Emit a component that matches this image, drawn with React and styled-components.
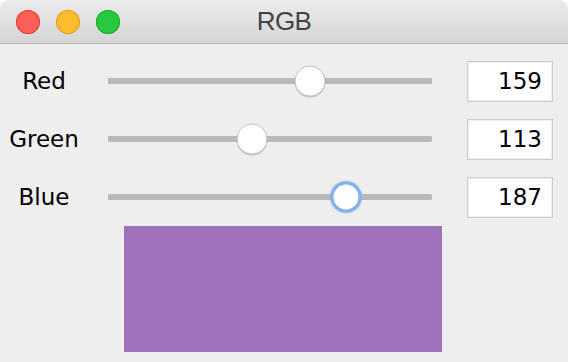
import styled, { createGlobalStyle } from 'styled-components';

const GlobalStyle = createGlobalStyle`
	html, body {
		margin: 0;
		padding: 0;
		background: #fff;
	}
	#root {
		width: 568px;
		height: 362px;
	}
`;

const channels = [
	{ name: 'Red', value: 159 },
	{ name: 'Green', value: 113 },
	{ name: 'Blue', value: 187, focused: true },
];

const TRACK = 324;

const App = () => {
	const [r, g, b] = channels.map(c => c.value);
	return (
		<>
			<GlobalStyle />
			<Window>
				<TitleBar>
					<Lights>
						<Light color='#fe5f57' edge='#e0443e' />
						<Light color='#febc2e' edge='#dea123' />
						<Light color='#28c840' edge='#1aab29' />
					</Lights>
					<Title>RGB</Title>
					<span />
				</TitleBar>
				<Content>
					{channels.map(c => (
						<Row key={c.name}>
							<Label>{c.name}</Label>
							<Track>
								<Thumb
									focused={c.focused}
									style={{ left: (TRACK * c.value) / 255 }}
								/>
							</Track>
							<Field>{c.value}</Field>
						</Row>
					))}
					<Swatch style={{ background: `rgb(${r}, ${g}, ${b})` }} />
				</Content>
			</Window>
		</>
	);
};

const Window = styled.div`
	width: 568px;
	height: 362px;
	display: flex;
	flex-direction: column;
	background: #eeeeee;
	border-radius: 9px 9px 0 0;
	overflow: hidden;
	font-family: 'DejaVu Sans', sans-serif;
`;

const TitleBar = styled.div`
	height: 43px;
	flex-shrink: 0;
	display: grid;
	grid-template-columns: 1fr auto 1fr;
	align-items: center;
	background: linear-gradient(#ebebeb, #d5d5d5);
	border-bottom: 1px solid #b4b4b4;
`;

const Lights = styled.div`
	display: flex;
	gap: 16px;
	padding-left: 16px;
`;

const Light = styled.span`
	width: 24px;
	height: 24px;
	border-radius: 50%;
	background: ${props => props.color};
	box-shadow: inset 0 0 0 1px ${props => props.edge};
`;

const Title = styled.div`
	font-family: 'Liberation Sans', sans-serif;
	font-size: 26px;
	color: #444;
	letter-spacing: -0.6px;
`;

const Content = styled.div`
	display: flex;
	flex-direction: column;
	padding-top: 8px;
`;

const Row = styled.div`
	height: 58px;
	display: grid;
	grid-template-columns: 108px ${TRACK}px 1fr;
	align-items: center;
`;

const Label = styled.div`
	padding-right: 20px;
	text-align: center;
	font-size: 23px;
	color: #000;
`;

const Track = styled.div`
	position: relative;
	height: 6px;
	background: #b9b9b9;
	border-radius: 1px;
`;

const Thumb = styled.div`
	position: absolute;
	top: 50%;
	width: 31px;
	height: 31px;
	box-sizing: border-box;
	border-radius: 50%;
	background: #fff;
	transform: translate(-50%, -50%);
	border: ${props =>
		props.focused ? '3px solid #7fb1ec' : '1px solid #c6c6c6'};
	box-shadow: ${props =>
		props.focused
			? '0 0 1px 1px rgba(127, 177, 236, 0.5)'
			: '0 1px 1px rgba(0, 0, 0, 0.18)'};
`;

const Field = styled.div`
	justify-self: end;
	margin-right: 15px;
	width: 86px;
	height: 41px;
	box-sizing: border-box;
	border: 1px solid #cdcdcd;
	box-shadow: inset 0 0 0 1px #f0f0f0;
	background: #fff;
	display: flex;
	align-items: center;
	justify-content: flex-end;
	padding-right: 10px;
	font-size: 23px;
	color: #000;
`;

const Swatch = styled.div`
	margin: 0 0 0 124px;
	width: 318px;
	height: 126px;
`;

export default App;
